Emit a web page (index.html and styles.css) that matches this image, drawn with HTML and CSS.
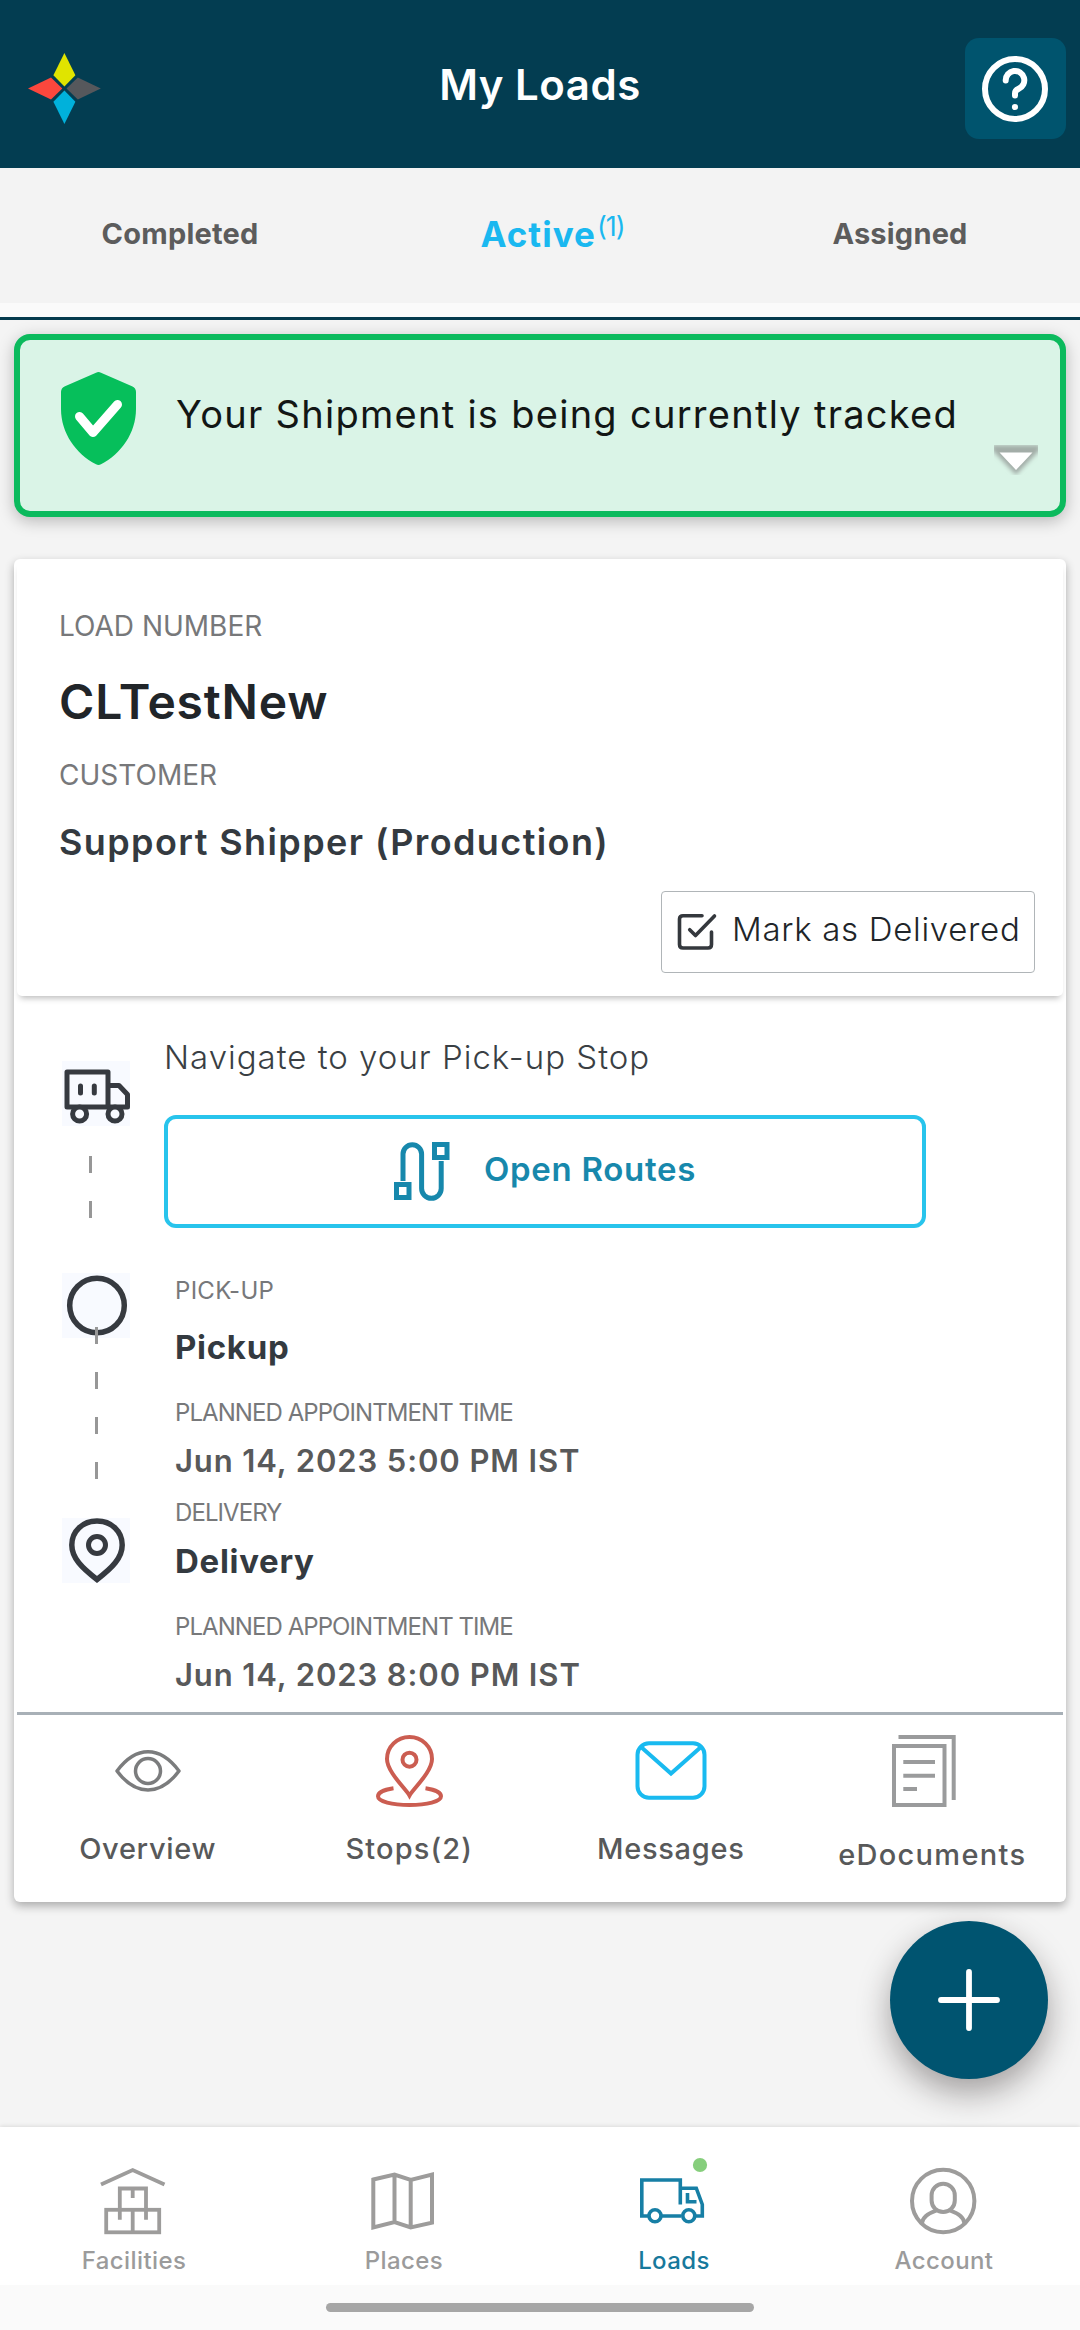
FILE: index.html
```html
<!DOCTYPE html>
<html lang="en">
    <head>
        <meta charset="utf-8">
        <title>My Loads</title>
        <link rel="stylesheet" href="styles.css">
    </head>
    <body>
        <header class="app-header">
            <svg class="logo" width="73" height="73" viewBox="0 0 73 73">
                <path fill="#e0e400" d="M36.4 1l11 22.3-11 11.2-11-11.2z"/>
                <path fill="#fb473d" d="M0 36.5l23-11 11.3 11-11.3 11z"/>
                <path fill="#56585c" d="M72.8 36.5l-23-11-11.3 11 11.3 11z"/>
                <path fill="#00b1db" d="M36.4 72l11-22.3-11-11.2-11 11.2z"/>
            </svg>
            <h1>My Loads</h1>
            <button type="button" class="help">
                <svg width="68" height="68" viewBox="0 0 68 68" fill="none" stroke="#fff" stroke-width="6" stroke-linecap="round">
                    <circle cx="34" cy="34" r="30"/>
                    <path d="M24.7 25.5a9.3 9.3 0 1 1 12.8 8.4Q34 35.3 34 38.5v2"/>
                    <circle cx="34" cy="52" r="3.1" fill="#fff" stroke="none"/>
                </svg>
            </button>
        </header>

        <nav class="load-tabs">
            <a class="completed">Completed</a>
            <a class="active">Active<sup>(1)</sup></a>
            <a class="assigned">Assigned</a>
        </nav>

        <main>
            <section class="tracking">
                <svg width="75" height="93" viewBox="0 0 75 93">
                    <path fill="#06bf5b" d="M35 .7Q37.5-.5 40 .7L71 14.2Q75 16 75 20V37C75 61 60 82 40 92.3Q37.5 93.7 35 92.3C15 82 0 61 0 37V20Q0 16 4 14.2Z"/>
                    <path fill="none" stroke="#fff" stroke-width="9" stroke-linecap="round" stroke-linejoin="round" d="M18.5 44.5L32 60.5 56.5 32.5"/>
                </svg>
                <p>Your Shipment is being currently tracked</p>
                <svg class="chevron" width="44" height="30" viewBox="0 0 44 30">
                    <defs>
                        <filter id="soft"><feGaussianBlur stdDeviation="2"/></filter>
                    </defs>
                    <path fill="#a3ada8" filter="url(#soft)" d="M-2 0H46V5L22 30-2 5Z"/>
                    <path fill="#fff" d="M5.5 7.5H38.5L22 25Z"/>
                </svg>
            </section>

            <section class="load-card">
                <div class="summary">
                    <p class="label">LOAD NUMBER</p>
                    <h2>CLTestNew</h2>
                    <p class="label customer">CUSTOMER</p>
                    <h3>Support Shipper (Production)</h3>
                    <button type="button" class="mark">
                        <svg width="40" height="38" viewBox="0 0 40 38" fill="none" stroke="#34383d" stroke-width="3.6" stroke-linecap="round" stroke-linejoin="round">
                            <path d="M25 2.7H6Q2.5 2.7 2.5 6V31.5Q2.5 35 6 35H31Q34.5 35 34.5 31.5V19"/>
                            <path d="M12.7 16.7L18.5 22.5 37.5 3"/>
                        </svg>
                        <span>Mark as Delivered</span>
                    </button>
                </div>

                <div class="leg route">
                    <div class="track">
                        <svg width="68" height="65" viewBox="0 0 68 65" fill="none" stroke="#363a40" stroke-width="5" stroke-linejoin="round">
                            <rect x="5" y="11" width="41" height="35"/>
                            <path d="M46 24.5H57L65.5 33.5V46H46"/>
                            <path stroke-linecap="round" d="M18.5 25V32M32.3 25V32"/>
                            <circle cx="17.6" cy="53" r="7" fill="#f8faff"/>
                            <circle cx="53" cy="53" r="7" fill="#f8faff"/>
                        </svg>
                        <div class="dashes"></div>
                    </div>
                    <div class="details">
                        <p class="hint">Navigate to your Pick-up Stop</p>
                        <button type="button" class="open-routes">
                            <svg width="57" height="60" viewBox="0 0 57 60" fill="none" stroke="#1788ac" stroke-width="5">
                                <rect x="2.5" y="42.5" width="12.5" height="13"/>
                                <rect x="40.5" y="2.5" width="12.5" height="13"/>
                                <path d="M9 39V12a9.3 9.3 0 0 1 18.6 0V46.5a9.8 9.8 0 0 0 19.6 0V19"/>
                            </svg>
                            <span>Open Routes</span>
                        </button>
                    </div>
                </div>

                <div class="leg pickup">
                    <div class="track">
                        <svg width="68" height="65" viewBox="0 0 68 65" fill="none" stroke="#363a40" stroke-width="5.5">
                            <circle cx="35" cy="32.5" r="27.3"/>
                        </svg>
                        <div class="dashes"></div>
                    </div>
                    <div class="details">
                        <p class="small-label type">PICK-UP</p>
                        <h4>Pickup</h4>
                        <p class="small-label planned">PLANNED APPOINTMENT TIME</p>
                        <p class="time">Jun 14, 2023 5:00 PM IST</p>
                    </div>
                </div>

                <div class="leg delivery">
                    <div class="track">
                        <svg width="68" height="65" viewBox="0 0 68 65" fill="none" stroke="#363a40" stroke-width="5.5">
                            <path d="M35 61.5C20 50 9.8 40 9.8 27 9.8 13 21 3 35 3S60.2 13 60.2 27C60.2 40 50 50 35 61.5Z"/>
                            <circle cx="35" cy="27" r="8.5" stroke-width="5"/>
                        </svg>
                    </div>
                    <div class="details">
                        <p class="small-label type">DELIVERY</p>
                        <h4>Delivery</h4>
                        <p class="small-label planned">PLANNED APPOINTMENT TIME</p>
                        <p class="time">Jun 14, 2023 8:00 PM IST</p>
                    </div>
                </div>

                <div class="actions">
                    <a class="overview">
                        <svg width="66" height="74" viewBox="0 0 66 74" fill="none" stroke="#7b7c7d" stroke-width="3.5">
                            <path stroke-linejoin="round" d="M2 37C8 29 19 17.8 33 17.8S58 29 64 37C58 45 47 56 33 56S8 45 2 37Z"/>
                            <circle cx="33" cy="37" r="12.5"/>
                        </svg>
                        <span>Overview</span>
                    </a>
                    <a class="stops">
                        <svg width="68" height="74" viewBox="0 0 68 74" fill="none" stroke="#cb5d51" stroke-width="4">
                            <path d="M34.5 61.5C31 55 12 38 12 25A22.5 22 0 0 1 57 25C57 38 38 55 34.5 61.5Z"/>
                            <circle cx="34.5" cy="25.7" r="7"/>
                            <path d="M18.5 54.3C10 55.5 3 58.5 3 62.3 3 67.5 17 71 34.5 71S66 67.5 66 62.3C66 58.5 59 55.5 50.5 54.3"/>
                        </svg>
                        <span>Stops(2)</span>
                    </a>
                    <a class="messages">
                        <svg width="72" height="74" viewBox="0 0 72 74" fill="none" stroke="#19baf0" stroke-width="4">
                            <rect x="2.5" y="9.3" width="67" height="54.5" rx="11.5"/>
                            <path d="M5.5 12.5L36 39.5 66.5 12.5"/>
                        </svg>
                        <span>Messages</span>
                    </a>
                    <a class="documents">
                        <svg width="65" height="74" viewBox="0 0 65 74" fill="none" stroke="#9a9b9c" stroke-width="4">
                            <rect x="2" y="12" width="50.5" height="59"/>
                            <path d="M6.5 3H61.7V66M11.3 28H43M11.3 41.7H43M11.3 55H25"/>
                        </svg>
                        <span>eDocuments</span>
                    </a>
                </div>
            </section>

            <button type="button" class="add">
                <svg width="62" height="62" viewBox="0 0 62 62" stroke="#fff" stroke-width="5.8" stroke-linecap="round">
                    <path d="M31 3V59M3 31H59"/>
                </svg>
            </button>
        </main>

        <nav class="bottom-nav">
            <a class="facilities">
                <svg width="66" height="76" viewBox="0 0 66 76" fill="none" stroke="#9d9c9b" stroke-width="3.8">
                    <path d="M1 21.5L32.7 7 64.5 21.5"/>
                    <path d="M19.8 46.8V25.5H46V46.8"/>
                    <rect x="6.2" y="46.8" width="53" height="22.5"/>
                    <path d="M32.7 25V35M32.7 47V69M19.8 47V56.7M46 47V56.7"/>
                </svg>
                <span>Facilities</span>
            </a>
            <a class="places">
                <svg width="64" height="76" viewBox="0 0 64 76" fill="none" stroke="#9d9c9b" stroke-width="4">
                    <path d="M2.3 16.5L23.5 11.5 39.7 17 61 11.5V59.7L39.7 64.5 23.5 59 2.3 64.5ZM23.5 11.5V59M39.7 17V64.5"/>
                </svg>
                <span>Places</span>
            </a>
            <a class="loads">
                <svg width="68" height="76" viewBox="0 0 68 76" fill="none" stroke="#177fa5" stroke-width="3.6">
                    <path d="M9 53H2.8V17H41.3V41.5M41.3 25.2H57.3L63.3 41.5V53H57M23 53H42.5"/>
                    <path d="M48.5 30V38.8H57.5"/>
                    <circle cx="16" cy="52.7" r="6"/>
                    <circle cx="49.8" cy="52.7" r="6"/>
                    <circle cx="61" cy="2" r="7.1" fill="#86ce7c" stroke="none"/>
                </svg>
                <span>Loads</span>
            </a>
            <a class="account">
                <svg width="68" height="76" viewBox="0 0 68 76" fill="none" stroke="#9d9c9b" stroke-width="4">
                    <circle cx="34.2" cy="38" r="31.2"/>
                    <rect x="22.6" y="20.7" width="23.2" height="28.3" rx="11.6"/>
                    <path d="M13 60C13.5 53.5 20 50 27.5 47.3M55.4 60C54.9 53.5 48.4 50 40.9 47.3"/>
                </svg>
                <span>Account</span>
            </a>
        </nav>
        <footer class="gesture-bar"><div class="handle"></div></footer>
    </body>
</html>
```
FILE: styles.css
```css
* {
    box-sizing: border-box;
}

body {
    margin: 0;
    width: 1080px;
    height: 2330px;
    display: flex;
    flex-direction: column;
    overflow: hidden;
    background: #f4f4f4;
    font-family: Inter, "Open Sans", sans-serif;
}

h1, h2, h3, h4, p {
    margin: 0;
    white-space: nowrap;
}

button {
    padding: 0;
    border: 0;
    font-family: inherit;
}

svg {
    display: block;
    flex: none;
    overflow: visible;
}

.app-header {
    height: 168px;
    padding: 9px 14px 0;
    display: grid;
    grid-template-columns: 101px 1fr 101px;
    align-items: center;
    background: #033d51;
}

.logo {
    margin-left: 14px;
}

.app-header h1 {
    padding-bottom: 9px;
    color: #fff;
    font-size: 42px;
    font-weight: 600;
    letter-spacing: 0.5px;
    text-align: center;
}

.help {
    height: 101px;
    padding-right: 2px;
    display: flex;
    align-items: center;
    justify-content: center;
    border-radius: 14px;
    background: #00546e;
}

.load-tabs {
    height: 152px;
    display: grid;
    grid-template-columns: repeat(3, 1fr);
    border-bottom: 3px solid #053a4d;
    background: linear-gradient(#f3f3f3 135px, #fafafa 135px);
    color: #5c5c5c;
    font-size: 29px;
    font-weight: 700;
    letter-spacing: 0.2px;
    line-height: 132px;
    text-align: center;
}

.load-tabs .active {
    padding-left: 25px;
    color: #1ab8f0;
    font-size: 35px;
    letter-spacing: 1px;
}

.load-tabs sup {
    margin-left: 1px;
    font-size: 27px;
    font-weight: 400;
    letter-spacing: -1px;
    line-height: 0;
    vertical-align: 11px;
}

main {
    flex: 1;
    padding: 14px 14px 0;
    position: relative;
}

.tracking {
    height: 183px;
    padding: 32px 22px 0 41px;
    display: flex;
    align-items: flex-start;
    border: 6px solid #0bba5d;
    border-radius: 16px;
    background: #daf4e7;
    box-shadow: 0 4px 16px rgba(0, 0, 0, 0.25);
}

.tracking p {
    margin: 17px 0 0 40px;
    color: #121615;
    font-size: 38px;
    letter-spacing: 1.28px;
    line-height: 50px;
}

.chevron {
    margin: 73px 0 0 auto;
    overflow: hidden;
}

.load-card {
    height: 1343px;
    margin-top: 42px;
    padding: 3px 3px 0;
    border-radius: 6px;
    background: #fff;
    box-shadow: 0 4px 10px rgba(0, 0, 0, 0.3);
}

.summary {
    height: 434px;
    padding: 44px 28px 0 42px;
    border-radius: 5px;
    box-shadow: 0 5px 6px -3px rgba(0, 0, 0, 0.28);
}

.label {
    color: #77787a;
    font-size: 28px;
    line-height: 40px;
}

.customer {
    margin-top: 23px;
}

.summary h2 {
    margin-top: 26px;
    color: #212529;
    font-size: 48px;
    font-weight: 600;
    letter-spacing: 0.8px;
    line-height: 60px;
}

.summary h3 {
    margin-top: 22px;
    color: #343a40;
    font-size: 36px;
    font-weight: 600;
    letter-spacing: 1.4px;
    line-height: 50px;
}

.mark {
    width: 374px;
    height: 82px;
    margin: 24px 0 0 auto;
    padding: 0 0 4px 15px;
    display: flex;
    align-items: center;
    gap: 15px;
    border: 1px solid #b0b5b8;
    border-radius: 4px;
    background: #fff;
    color: #212529;
    font-size: 33px;
    font-weight: 300;
    letter-spacing: 0.7px;
    white-space: nowrap;
}

.mark svg {
    margin-top: 4px;
}

.mark span {
    margin-bottom: 2px;
}

.leg {
    display: flex;
    align-items: flex-start;
}

.track {
    width: 147px;
    padding-left: 45px;
    display: flex;
    flex-direction: column;
    align-items: flex-start;
}

.track svg {
    background: #f8faff;
}

.dashes {
    width: 3px;
    background: repeating-linear-gradient(#979797 0 17px, transparent 17px 45px);
}

.route {
    height: 277px;
}

.route .track {
    padding-top: 65px;
}

.route .dashes {
    height: 62px;
    margin: 30px 0 0 27px;
}

.hint {
    margin-top: 41px;
    color: #3a3f44;
    font-size: 33px;
    font-weight: 300;
    letter-spacing: 1px;
    line-height: 40px;
}

.open-routes {
    width: 762px;
    height: 113px;
    margin-top: 38px;
    padding-right: 0;
    display: flex;
    align-items: center;
    justify-content: center;
    gap: 33px;
    border: 4px solid #28c4ec;
    border-radius: 12px;
    background: #fff;
    color: #1788ac;
    font-size: 33px;
    font-weight: 600;
    letter-spacing: 0.7px;
}

.open-routes span {
    margin-bottom: 6px;
}

.pickup {
    height: 225px;
}

.pickup .dashes {
    height: 152px;
    margin: -11px 0 0 33px;
}

.pickup .details, .delivery .details {
    padding-left: 11px;
}

.pickup .type {
    margin-top: 3px;
    letter-spacing: 0.3px;
}

.delivery {
    height: 214px;
}

.delivery .track {
    padding-top: 20px;
}

.small-label {
    color: #77787a;
    font-size: 24px;
    letter-spacing: -0.93px;
    line-height: 30px;
}

.leg h4 {
    margin-top: 21px;
    color: #343a40;
    font-size: 33px;
    font-weight: 700;
    letter-spacing: 0.7px;
    line-height: 40px;
}

.delivery h4 {
    margin-top: 13px;
}

.planned {
    margin-top: 31px;
}

.time {
    margin-top: 13px;
    color: #58595a;
    font-size: 31px;
    font-weight: 600;
    letter-spacing: 0.9px;
    line-height: 40px;
}

.actions {
    height: 187px;
    padding-top: 19px;
    display: grid;
    grid-template-columns: repeat(4, 1fr);
    border-top: 3px solid #a8b0b7;
    color: #58595a;
    font-size: 29px;
    font-weight: 500;
    letter-spacing: 0.7px;
    line-height: 36px;
}

.actions a {
    display: flex;
    flex-direction: column;
    align-items: center;
    gap: 23px;
}

.actions .stops {
    letter-spacing: 1.1px;
}

.actions .documents {
    gap: 29px;
    letter-spacing: 1.3px;
}

.documents svg {
    margin-right: 16px;
}

.add {
    position: absolute;
    right: 32px;
    bottom: 48px;
    width: 158px;
    height: 158px;
    display: flex;
    align-items: center;
    justify-content: center;
    border-radius: 50%;
    background: #005470;
    box-shadow: 0 14px 32px rgba(30, 20, 20, 0.38);
}

.bottom-nav {
    position: relative;
    height: 158px;
    padding-top: 36px;
    display: grid;
    grid-template-columns: repeat(4, 1fr);
    background: #fff;
    box-shadow: 0 -1px 4px rgba(0, 0, 0, 0.1);
    color: #9b9b9b;
    font-size: 24px;
    font-weight: 500;
    letter-spacing: 0.4px;
    line-height: 30px;
}

.bottom-nav a {
    padding-right: 2px;
    display: flex;
    flex-direction: column;
    align-items: center;
    gap: 7px;
}

.bottom-nav svg {
    margin-right: 2px;
}

.bottom-nav .loads {
    color: #17799c;
}

.gesture-bar {
    position: relative;
    height: 45px;
    padding-top: 18px;
    background: #fafafa;
}

.handle {
    width: 428px;
    height: 9px;
    margin: 0 auto;
    border-radius: 5px;
    background: #a6a6a6;
}
```
